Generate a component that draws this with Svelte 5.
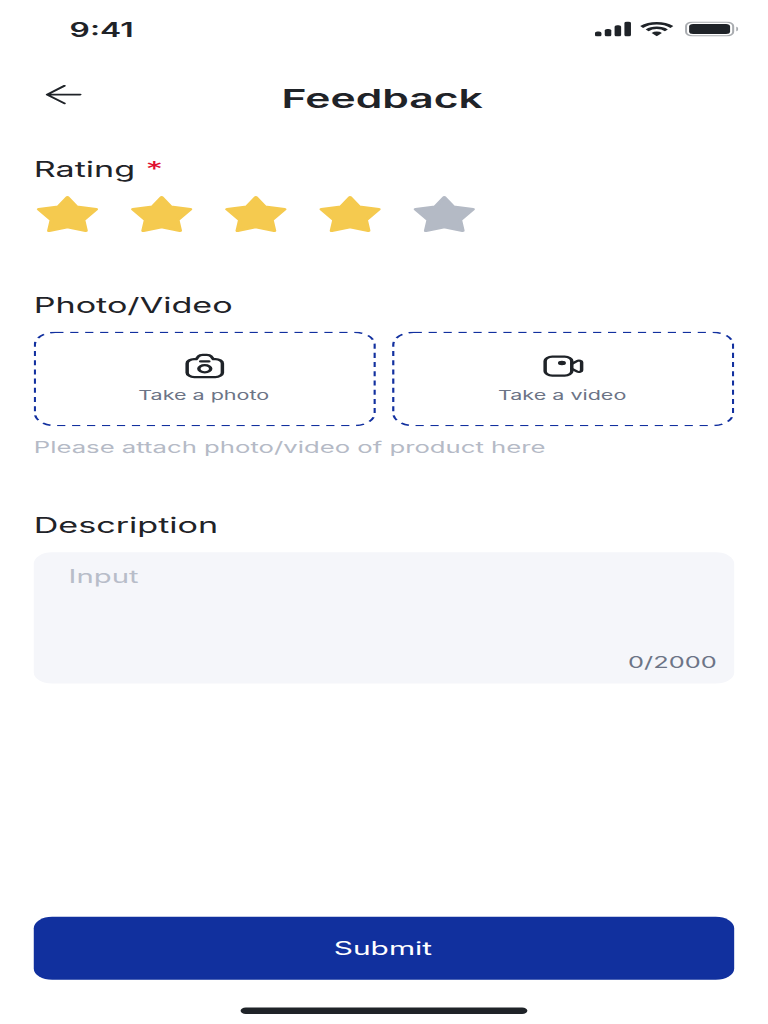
<script>
  const ratings = [true, true, true, true, false];
</script>

<div class="viewport">
  <main class="stage">
    <div class="status">
      <span class="time">9:41</span>
      <div class="status-icons">
        <svg class="signal" width="18" height="12" viewBox="0 0 18 12">
          <rect x="0" y="8" width="3.2" height="4" rx="1.2" />
          <rect x="4.8" y="6" width="3.2" height="6" rx="1.2" />
          <rect x="9.6" y="3" width="3.2" height="9" rx="1.2" />
          <rect x="14.4" y="0" width="3.2" height="12" rx="1.2" />
        </svg>
        <svg class="wifi" width="17" height="12" viewBox="0 0 17 12">
          <path d="M0.8 4.4 A10.6 10.6 0 0 1 15.6 4.4" fill="none" stroke="#1f2328" stroke-width="2" />
          <path d="M3.5 7 A6.6 6.6 0 0 1 12.9 7" fill="none" stroke="#1f2328" stroke-width="2" />
          <path d="M5.7 9.1 A3.4 3.4 0 0 1 10.7 9.1 L8.2 11.8 Z" fill="#1f2328" />
        </svg>
        <svg class="battery" width="26" height="12" viewBox="0 0 26 12">
          <rect x="0.5" y="0.5" width="23" height="11" rx="3.2" fill="none" stroke="#a9acb0" />
          <rect x="2" y="2" width="20" height="8" rx="2" fill="#1f2328" />
          <path d="M25 4.2 C25.8 4.5 26 5.2 26 6 C26 6.8 25.8 7.5 25 7.8 Z" fill="#a9acb0" />
        </svg>
      </div>
    </div>

    <header class="topbar">
      <svg class="back" width="24" height="24" viewBox="0 0 24 24" fill="none">
        <path d="M6.5 12 H22.7 M15 5 L6.5 12 L15 19" stroke="#1f2328" stroke-width="1.3" stroke-linecap="round" stroke-linejoin="round" />
      </svg>
      <h1>Feedback</h1>
      <span></span>
    </header>

    <section class="rating">
      <div class="label">Rating <span class="req">*</span></div>
      <div class="stars">
        {#each ratings as on}
          <svg width="32" height="32" viewBox="0.5 0 32 32">
            <polygon
              class={on ? 'star on' : 'star'}
              points="16.95,2.5 21.4,10 30.9,12 24.7,20.5 25.9,29 16.95,26 8,29 9.2,20.5 3,12 12.5,10"
            />
          </svg>
        {/each}
      </div>
    </section>

    <section class="media">
      <div class="label">Photo/Video</div>
      <div class="uploads">
        <div class="upload">
          <svg class="dash" width="167" height="75" viewBox="0 0 167 75">
            <rect x="0.5" y="0.5" width="166" height="74" rx="10" />
          </svg>
          <svg width="24" height="24" viewBox="0.5 0 24 24" fill="none" stroke="#1f2328" stroke-width="1.7" stroke-linejoin="round" stroke-linecap="round">
            <path d="M7.8 6.8 L8.9 4.6 A2.5 2.5 0 0 1 11 3.4 H13 A2.5 2.5 0 0 1 15.1 4.6 L16.2 6.8 H17 A3.4 3.4 0 0 1 20.6 10.3 V17.5 A3.5 3.5 0 0 1 17 21 H7 A3.5 3.5 0 0 1 3.4 17.5 V10.3 A3.4 3.4 0 0 1 7 6.8 Z" />
            <circle cx="12" cy="14.4" r="2.9" />
            <path d="M10 8.6 H14" />
          </svg>
          <span>Take a photo</span>
        </div>
        <div class="upload">
          <svg class="dash" width="167" height="75" viewBox="0 0 167 75">
            <rect x="0.5" y="0.5" width="166" height="74" rx="10" />
          </svg>
          <svg width="24" height="24" viewBox="0.5 0 24 24" fill="none" stroke="#1f2328" stroke-width="1.7" stroke-linejoin="round" stroke-linecap="round">
            <rect x="3.2" y="4.8" width="13" height="15" rx="3.5" />
            <path d="M16.2 10.5 L18.8 8.3 A1.3 1.3 0 0 1 21 9.3 V15.6 A1.3 1.3 0 0 1 18.8 16.6 L16.2 14.4" />
            <ellipse cx="11.4" cy="9.9" rx="1.1" ry="0.9" fill="#1f2328" />
          </svg>
          <span>Take a video</span>
        </div>
      </div>
      <p class="hint">Please attach photo/video of product here</p>
    </section>

    <section class="description">
      <div class="label">Description</div>
      <div class="field">
        <span class="placeholder">Input</span>
        <span class="count">0/2000</span>
      </div>
    </section>

    <footer class="bottom">
      <button type="button">Submit</button>
      <div class="home"></div>
    </footer>
  </main>
</div>

<style>
  :global(body) {
    margin: 0;
    background: #ffffff;
  }
  .viewport {
    width: 768px;
    height: 1024px;
    overflow: hidden;
  }
  .stage {
    width: 375px;
    height: 812px;
    transform: translateX(1px) scale(2.048, 1.2611);
    transform-origin: 0 0;
    display: flex;
    flex-direction: column;
    font-family: Inter, "Liberation Sans", sans-serif;
    color: #1f2328;
    background: #ffffff;
  }
  .status {
    height: 46px;
    display: flex;
    align-items: center;
    justify-content: space-between;
    padding: 0 15.5px 0 33.5px;
    flex: none;
  }
  .time {
    font-size: 15.5px;
    font-weight: 600;
  }
  .status-icons {
    display: flex;
    align-items: center;
    gap: 4.5px;
  }
  .signal {
    fill: #1f2328;
  }
  .topbar {
    margin-top: 16.5px;
    padding: 0 17px 0 16px;
    height: 32px;
    display: grid;
    grid-template-columns: 24px 1fr 24px;
    flex: none;
  }
  h1 {
    margin: 0;
    padding: 0.6px 1.75px 0 0;
    text-align: center;
    font-size: 20.8px;
    line-height: 32px;
    font-weight: 600;
  }
  section {
    padding: 0 17px 0 16px;
    flex: none;
  }
  .label {
    font-size: 16.65px;
    line-height: 20px;
    font-weight: 400;
  }
  .req {
    color: #e0102f;
    margin-left: 0.5px;
  }
  .rating {
    margin-top: 29.3px;
  }
  .stars {
    margin-top: 10.3px;
    height: 32px;
    display: flex;
    gap: 14px;
  }
  .star {
    fill: #b4bac5;
    stroke: #b4bac5;
    stroke-width: 2;
    stroke-linejoin: round;
  }
  .star.on {
    fill: #f5ca4f;
    stroke: #f5ca4f;
  }
  .media {
    margin-top: 45.9px;
  }
  .uploads {
    margin-top: 11px;
    display: flex;
    gap: 8px;
  }
  .upload {
    position: relative;
    flex: 1;
    height: 75px;
    display: flex;
    flex-direction: column;
    align-items: center;
    padding-top: 15px;
    box-sizing: border-box;
    font-size: 10.5px;
    line-height: 16px;
    color: #6c7486;
  }
  .upload span {
    margin: 4.2px 1px 0 0;
  }
  .dash {
    position: absolute;
    inset: 0;
  }
  .dash rect {
    fill: none;
    stroke: #12309f;
    stroke-width: 1.15;
    stroke-dasharray: 4 3.3;
  }
  .hint {
    margin: 8.7px 0 0;
    font-size: 12.55px;
    line-height: 16px;
    color: #b5bac6;
  }
  .description {
    margin-top: 44.6px;
  }
  .field {
    margin-top: 11.2px;
    height: 104px;
    border-radius: 9px;
    background: #f5f6fa;
    display: flex;
    flex-direction: column;
    justify-content: space-between;
    padding: 9px 8.5px 8px 17px;
    box-sizing: border-box;
  }
  .placeholder {
    font-size: 14.3px;
    line-height: 20px;
    color: #b8bdc9;
  }
  .count {
    align-self: flex-end;
    font-size: 12.4px;
    line-height: 16px;
    color: #6c7486;
  }
  .bottom {
    margin-top: auto;
    padding: 0 17px 8px 16px;
    display: flex;
    flex-direction: column;
    align-items: center;
  }
  button {
    width: 100%;
    height: 49.5px;
    border: 0;
    border-radius: 9px;
    background: #11309e;
    color: #ffffff;
    font-family: inherit;
    font-size: 14.6px;
    font-weight: 400;
    padding: 0 1px 0 0;
  }
  .home {
    margin-top: 22px;
    width: 140px;
    height: 5.5px;
    border-radius: 3px;
    background: #1f2328;
  }
</style>
